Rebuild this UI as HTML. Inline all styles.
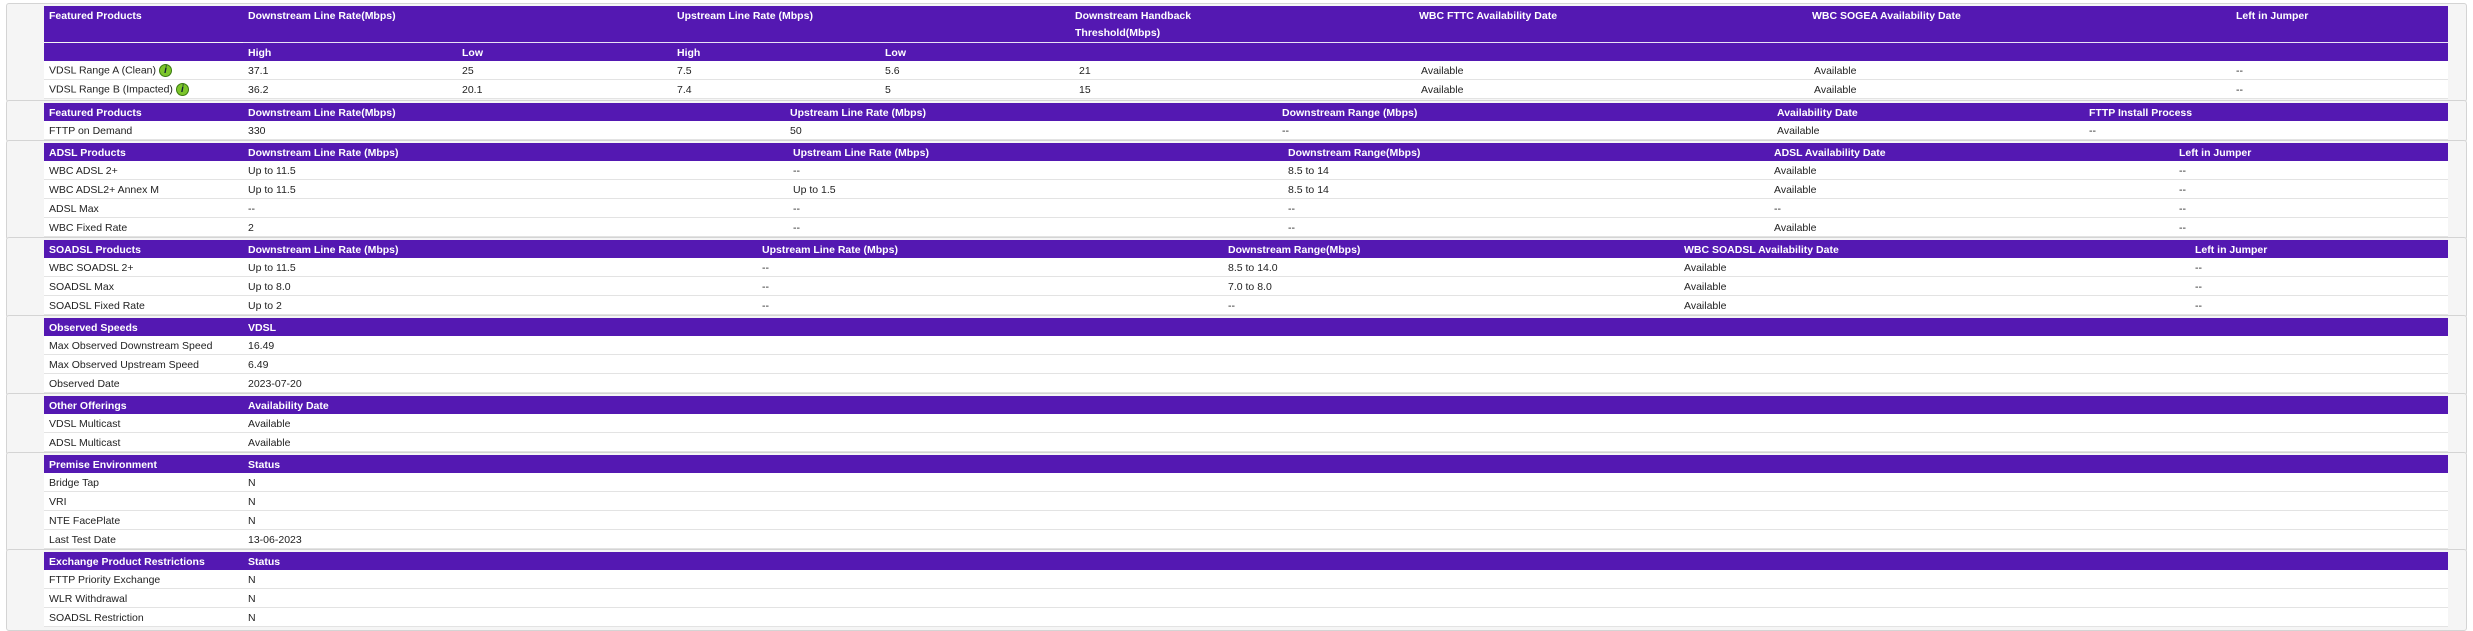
<!DOCTYPE html>
<html><head><style>
body{margin:0;width:2473px;height:629px;background:#fff;position:relative;overflow:hidden;font-family:"Liberation Sans",Arial,sans-serif;font-size:10.5px;color:#222}
.b{position:absolute;left:6px;width:2459px;border:1px solid #d4d4d4;border-radius:3px;background:#f5f5f5}
.h,.r{position:absolute;left:44px;width:2404px;height:18px}
.h{background:#5418b2;color:#fff;font-weight:bold}
.r{background:#fff;height:18px;border-bottom:1px solid #e3e3e3}
.h span,.r span{position:absolute;top:4px;white-space:nowrap}
.i{display:inline-block;width:13px;height:13px;border-radius:50%;background:#7cc52a;border:1px solid #3a7a10;color:#123;font-size:10px;line-height:12px;text-align:center;font-weight:bold;font-style:italic;vertical-align:middle;margin-left:3px;box-sizing:border-box}
</style></head><body>
<div class="b" style="top:3px;height:97px"></div>
<div class="h" style="top:6px;height:36px"><span style="left:5px">Featured Products</span><span style="left:204px">Downstream Line Rate(Mbps)</span><span style="left:633px">Upstream Line Rate (Mbps)</span><span style="left:1031px">Downstream Handback</span><span style="left:1031px;top:21px">Threshold(Mbps)</span><span style="left:1375px">WBC FTTC Availability Date</span><span style="left:1768px">WBC SOGEA Availability Date</span><span style="left:2192px">Left in Jumper</span></div>
<div style="position:absolute;left:243px;top:42px;width:2205px;height:1px;background:#e8e0f5"></div>
<div class="h" style="top:43px;height:18px"><span style="left:204px">High</span><span style="left:418px">Low</span><span style="left:633px">High</span><span style="left:841px">Low</span></div>
<div class="r" style="top:61px"><span style="left:5px;top:3px">VDSL Range A (Clean)<span class="i" style="position:static">i</span></span><span style="left:204px">37.1</span><span style="left:418px">25</span><span style="left:633px">7.5</span><span style="left:841px">5.6</span><span style="left:1035px">21</span><span style="left:1377px">Available</span><span style="left:1770px">Available</span><span style="left:2192px">--</span></div>
<div class="r" style="top:80px"><span style="left:5px;top:3px">VDSL Range B (Impacted)<span class="i" style="position:static">i</span></span><span style="left:204px">36.2</span><span style="left:418px">20.1</span><span style="left:633px">7.4</span><span style="left:841px">5</span><span style="left:1035px">15</span><span style="left:1377px">Available</span><span style="left:1770px">Available</span><span style="left:2192px">--</span></div>
<div class="b" style="top:100px;height:40px"></div>
<div class="h" style="top:103px"><span style="left:5px">Featured Products</span><span style="left:204px">Downstream Line Rate(Mbps)</span><span style="left:746px">Upstream Line Rate (Mbps)</span><span style="left:1238px">Downstream Range (Mbps)</span><span style="left:1733px">Availability Date</span><span style="left:2045px">FTTP Install Process</span></div>
<div class="r" style="top:121px"><span style="left:5px">FTTP on Demand</span><span style="left:204px">330</span><span style="left:746px">50</span><span style="left:1238px">--</span><span style="left:1733px">Available</span><span style="left:2045px">--</span></div>
<div class="b" style="top:140px;height:98px"></div>
<div class="h" style="top:143px"><span style="left:5px">ADSL Products</span><span style="left:204px">Downstream Line Rate (Mbps)</span><span style="left:749px">Upstream Line Rate (Mbps)</span><span style="left:1244px">Downstream Range(Mbps)</span><span style="left:1730px">ADSL Availability Date</span><span style="left:2135px">Left in Jumper</span></div>
<div class="r" style="top:161px"><span style="left:5px">WBC ADSL 2+</span><span style="left:204px">Up to 11.5</span><span style="left:749px">--</span><span style="left:1244px">8.5 to 14</span><span style="left:1730px">Available</span><span style="left:2135px">--</span></div>
<div class="r" style="top:180px"><span style="left:5px">WBC ADSL2+ Annex M</span><span style="left:204px">Up to 11.5</span><span style="left:749px">Up to 1.5</span><span style="left:1244px">8.5 to 14</span><span style="left:1730px">Available</span><span style="left:2135px">--</span></div>
<div class="r" style="top:199px"><span style="left:5px">ADSL Max</span><span style="left:204px">--</span><span style="left:749px">--</span><span style="left:1244px">--</span><span style="left:1730px">--</span><span style="left:2135px">--</span></div>
<div class="r" style="top:218px"><span style="left:5px">WBC Fixed Rate</span><span style="left:204px">2</span><span style="left:749px">--</span><span style="left:1244px">--</span><span style="left:1730px">Available</span><span style="left:2135px">--</span></div>
<div class="b" style="top:237px;height:79px"></div>
<div class="h" style="top:240px"><span style="left:5px">SOADSL Products</span><span style="left:204px">Downstream Line Rate (Mbps)</span><span style="left:718px">Upstream Line Rate (Mbps)</span><span style="left:1184px">Downstream Range(Mbps)</span><span style="left:1640px">WBC SOADSL Availability Date</span><span style="left:2151px">Left in Jumper</span></div>
<div class="r" style="top:258px"><span style="left:5px">WBC SOADSL 2+</span><span style="left:204px">Up to 11.5</span><span style="left:718px">--</span><span style="left:1184px">8.5 to 14.0</span><span style="left:1640px">Available</span><span style="left:2151px">--</span></div>
<div class="r" style="top:277px"><span style="left:5px">SOADSL Max</span><span style="left:204px">Up to 8.0</span><span style="left:718px">--</span><span style="left:1184px">7.0 to 8.0</span><span style="left:1640px">Available</span><span style="left:2151px">--</span></div>
<div class="r" style="top:296px"><span style="left:5px">SOADSL Fixed Rate</span><span style="left:204px">Up to 2</span><span style="left:718px">--</span><span style="left:1184px">--</span><span style="left:1640px">Available</span><span style="left:2151px">--</span></div>
<div class="b" style="top:315px;height:79px"></div>
<div class="h" style="top:318px"><span style="left:5px">Observed Speeds</span><span style="left:204px">VDSL</span></div>
<div class="r" style="top:336px"><span style="left:5px">Max Observed Downstream Speed</span><span style="left:204px">16.49</span></div>
<div class="r" style="top:355px"><span style="left:5px">Max Observed Upstream Speed</span><span style="left:204px">6.49</span></div>
<div class="r" style="top:374px"><span style="left:5px">Observed Date</span><span style="left:204px">2023-07-20</span></div>
<div class="b" style="top:393px;height:60px"></div>
<div class="h" style="top:396px"><span style="left:5px">Other Offerings</span><span style="left:204px">Availability Date</span></div>
<div class="r" style="top:414px"><span style="left:5px">VDSL Multicast</span><span style="left:204px">Available</span></div>
<div class="r" style="top:433px"><span style="left:5px">ADSL Multicast</span><span style="left:204px">Available</span></div>
<div class="b" style="top:452px;height:98px"></div>
<div class="h" style="top:455px"><span style="left:5px">Premise Environment</span><span style="left:204px">Status</span></div>
<div class="r" style="top:473px"><span style="left:5px">Bridge Tap</span><span style="left:204px">N</span></div>
<div class="r" style="top:492px"><span style="left:5px">VRI</span><span style="left:204px">N</span></div>
<div class="r" style="top:511px"><span style="left:5px">NTE FacePlate</span><span style="left:204px">N</span></div>
<div class="r" style="top:530px"><span style="left:5px">Last Test Date</span><span style="left:204px">13-06-2023</span></div>
<div class="b" style="top:549px;height:80px"></div>
<div class="h" style="top:552px"><span style="left:5px">Exchange Product Restrictions</span><span style="left:204px">Status</span></div>
<div class="r" style="top:570px"><span style="left:5px">FTTP Priority Exchange</span><span style="left:204px">N</span></div>
<div class="r" style="top:589px"><span style="left:5px">WLR Withdrawal</span><span style="left:204px">N</span></div>
<div class="r" style="top:608px"><span style="left:5px">SOADSL Restriction</span><span style="left:204px">N</span></div>
</body></html>
